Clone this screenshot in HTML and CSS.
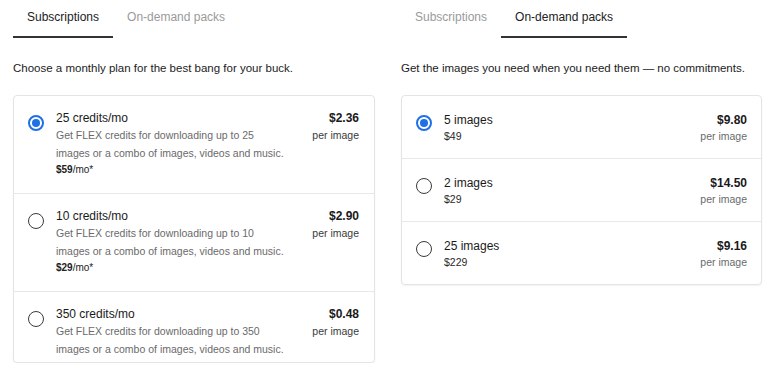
FILE: index.html
```html
<!DOCTYPE html>
<html lang="en">
  <head>
    <meta charset="UTF-8" />
    <title>Plans</title>
    <link rel="stylesheet" href="styles.css">
  </head>
  <body>
    <div class="page">
      <section class="panel">
        <nav class="tabs">
          <span class="tab active">Subscriptions</span>
          <span class="tab">On-demand packs</span>
        </nav>
        <p class="lead">Choose a monthly plan for the best bang for your buck.</p>

        <div class="card clipped">
          <div class="option">
            <span class="radio checked"></span>
            <div class="info">
              <div class="title">25 credits/mo</div>
              <div class="desc">Get FLEX credits for downloading up to 25 images or a combo of images, videos and music.</div>
              <div class="cost"><b>$59</b>/mo*</div>
            </div>
            <div class="price">
              <div class="amount">$2.36</div>
              <div class="unit">per image</div>
            </div>
          </div>

          <div class="option">
            <span class="radio"></span>
            <div class="info">
              <div class="title">10 credits/mo</div>
              <div class="desc">Get FLEX credits for downloading up to 10 images or a combo of images, videos and music.</div>
              <div class="cost"><b>$29</b>/mo*</div>
            </div>
            <div class="price">
              <div class="amount">$2.90</div>
              <div class="unit">per image</div>
            </div>
          </div>

          <div class="option">
            <span class="radio"></span>
            <div class="info">
              <div class="title">350 credits/mo</div>
              <div class="desc">Get FLEX credits for downloading up to 350 images or a combo of images, videos and music.</div>
            </div>
            <div class="price">
              <div class="amount">$0.48</div>
              <div class="unit">per image</div>
            </div>
          </div>
        </div>
      </section>

      <section class="panel">
        <nav class="tabs">
          <span class="tab">Subscriptions</span>
          <span class="tab active">On-demand packs</span>
        </nav>
        <p class="lead">Get the images you need when you need them — no commitments.</p>

        <div class="card packs">
          <div class="option">
            <span class="radio checked"></span>
            <div class="info">
              <div class="title">5 images</div>
              <div class="sub">$49</div>
            </div>
            <div class="price">
              <div class="amount">$9.80</div>
              <div class="unit">per image</div>
            </div>
          </div>

          <div class="option">
            <span class="radio"></span>
            <div class="info">
              <div class="title">2 images</div>
              <div class="sub">$29</div>
            </div>
            <div class="price">
              <div class="amount">$14.50</div>
              <div class="unit">per image</div>
            </div>
          </div>

          <div class="option">
            <span class="radio"></span>
            <div class="info">
              <div class="title">25 images</div>
              <div class="sub">$229</div>
            </div>
            <div class="price">
              <div class="amount">$9.16</div>
              <div class="unit">per image</div>
            </div>
          </div>
        </div>
      </section>
    </div>
  </body>
</html>
```

FILE: styles.css
```css
body {
  margin: 0;
  background: #fff;
  font-family: "Liberation Sans", Arial, sans-serif;
  color: #222;
}

.page {
  display: grid;
  grid-template-columns: 362px 361px;
  column-gap: 26px;
  padding-left: 13px;
}

.tabs {
  display: flex;
}

.tab {
  padding: 10px 14px 12px;
  font-size: 12px;
  line-height: 14px;
  color: #9a9a9a;
  border-bottom: 2px solid transparent;
}

.tab.active {
  color: #222;
  border-bottom-color: #333;
}

.lead {
  margin: 22px 0 19px;
  font-size: 11.5px;
  line-height: 16px;
  color: #1c1c1c;
}

.card {
  border: 1px solid #e4e4e4;
  border-radius: 4px;
  box-shadow: 0 1px 2px rgba(0, 0, 0, 0.06);
}

.card.clipped {
  height: 268px;
  box-sizing: border-box;
  overflow: hidden;
}

.option {
  display: flex;
  align-items: flex-start;
  padding: 14px 15px 15px 14px;
}

.option + .option {
  border-top: 1px solid #e8e8e8;
}

.packs .option {
  padding: 16px 14px 14px 14px;
}

.radio {
  flex: none;
  width: 16px;
  height: 16px;
  box-sizing: border-box;
  border: 1.6px solid #3a3a3a;
  border-radius: 50%;
  margin: 5px 12px 0 0;
  display: flex;
  align-items: center;
  justify-content: center;
}

.packs .radio {
  margin-top: 3px;
}

.radio.checked {
  border: 2px solid #1f6fe6;
}

.radio.checked::after {
  content: "";
  width: 8px;
  height: 8px;
  border-radius: 50%;
  background: #1f6fe6;
}

.info {
  flex: 1;
}

.title {
  font-size: 12px;
  line-height: 16px;
  color: #1a1a1a;
}

.desc {
  width: 232px;
  font-size: 10.5px;
  line-height: 18px;
  color: #6a6a6a;
}

.cost {
  font-size: 10px;
  line-height: 16px;
  color: #222;
}

.cost b {
  font-weight: 600;
}

.sub {
  font-size: 10.5px;
  line-height: 16px;
  color: #2a2a2a;
}

.price {
  text-align: right;
}

.amount {
  font-size: 12px;
  line-height: 16px;
  font-weight: bold;
  color: #1a1a1a;
}

.unit {
  font-size: 10.5px;
  line-height: 18px;
  color: #3a3a3a;
}

.packs .unit {
  line-height: 16px;
  color: #6a6a6a;
}
```
